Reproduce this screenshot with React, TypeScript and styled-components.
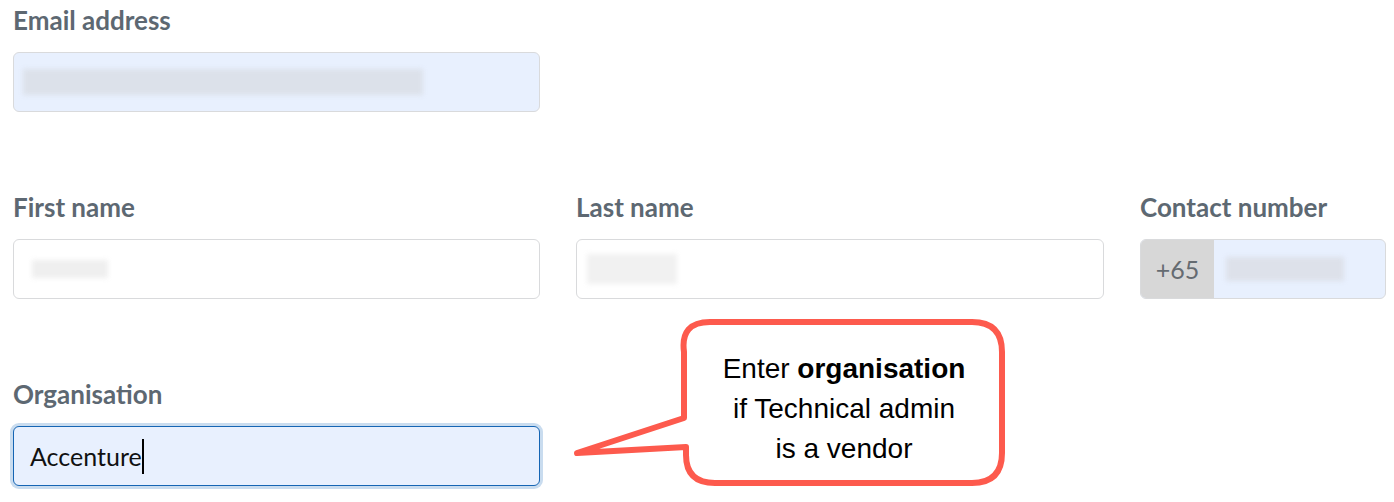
import React from 'react';
import styled, {createGlobalStyle, css} from 'styled-components';

const GlobalStyle = createGlobalStyle`
  html, body {
    margin: 0;
    padding: 0;
    background: #ffffff;
  }
  body {
    font-family: 'Lato', 'Noto Sans', sans-serif;
  }
`;

type Tone = 'autofill' | 'plain' | 'focus';

const Page = styled.div`
  position: relative;
  width: 1394px;
  height: 502px;
  overflow: hidden;
`;

const Form = styled.div`
  display: grid;
  grid-template-columns: 527px 528px 246px;
  column-gap: 36px;
  row-gap: 80px;
  padding: 5px 0 0 13px;
`;

const Field = styled.div<{$span?: number}>`
  display: flex;
  flex-direction: column;
  gap: 17px;
  grid-column: ${p => (p.$span ? `span ${p.$span}` : 'auto')};
`;

const Label = styled.label`
  font-size: 26px;
  line-height: 30px;
  font-weight: 700;
  color: #5d6872;
`;

const Box = styled.div<{$tone: Tone}>`
  box-sizing: border-box;
  height: 60px;
  border-radius: 6px;
  border: 1px solid #d9dadc;
  display: flex;
  align-items: center;
  overflow: hidden;
  ${p =>
    p.$tone === 'autofill' &&
    css`
      background: #e8f0fe;
    `}
  ${p =>
    p.$tone === 'plain' &&
    css`
      background: #ffffff;
    `}
  ${p =>
    p.$tone === 'focus' &&
    css`
      background: #e8f0fe;
      border-color: #1565b4;
      box-shadow: 0 0 0 3px #c9dcef;
    `}
`;

const Blur = styled.span<{$w: number; $h: number; $x: number; $c: string}>`
  display: block;
  width: ${p => p.$w}px;
  height: ${p => p.$h}px;
  margin-left: ${p => p.$x}px;
  background: ${p => p.$c};
  filter: blur(2.5px);
`;

const Prefix = styled.span`
  align-self: stretch;
  width: 73px;
  flex: none;
  background: #d7d7d7;
  color: #656b71;
  font-size: 25px;
  display: flex;
  align-items: center;
  justify-content: center;
`;

const Value = styled.span`
  margin-left: 16px;
  font-size: 25px;
  color: #111111;
  display: flex;
  align-items: center;
`;

const Caret = styled.span`
  display: inline-block;
  width: 2px;
  height: 35px;
  background: #000;
`;

const Callout = styled.div`
  position: absolute;
  left: 574px;
  top: 318px;
  width: 434px;
  height: 172px;
`;

const CalloutText = styled.div`
  position: absolute;
  left: 110px;
  top: 10px;
  width: 320px;
  height: 162px;
  display: flex;
  flex-direction: column;
  align-items: center;
  justify-content: center;
  font-family: 'Liberation Sans', Arial, sans-serif;
  font-size: 28px;
  line-height: 40px;
  color: #000;
  text-align: center;

  b {
    font-weight: 700;
  }
`;

export default function App() {
  return (
    <Page>
      <GlobalStyle />
      <Form>
        <Field $span={3}>
          <Label>Email address</Label>
          <Box $tone="autofill" style={{width: 527}}>
            <Blur $w={400} $h={26} $x={9} $c="#dce1ea" />
          </Box>
        </Field>
        <Field>
          <Label>First name</Label>
          <Box $tone="plain">
            <Blur $w={76} $h={18} $x={18} $c="#efefef" />
          </Box>
        </Field>
        <Field>
          <Label>Last name</Label>
          <Box $tone="plain">
            <Blur $w={90} $h={30} $x={10} $c="#f1f1f1" />
          </Box>
        </Field>
        <Field>
          <Label>Contact number</Label>
          <Box $tone="autofill">
            <Prefix>+65</Prefix>
            <Blur $w={118} $h={24} $x={12} $c="#dde1ea" />
          </Box>
        </Field>
        <Field $span={3}>
          <Label>Organisation</Label>
          <Box $tone="focus" style={{width: 527}}>
            <Value>
              Accenture
              <Caret />
            </Value>
          </Box>
        </Field>
      </Form>
      <Callout>
        <svg width="434" height="172" viewBox="0 0 434 172">
          <path
            d="M136 4 H398 Q428 4 428 34 V135 Q428 165 398 165 H141 Q112 165 112 137 V129 L3 135 L110 100 V34 Q106 4 136 4 Z"
            fill="#ffffff"
            stroke="#fd5a4d"
            strokeWidth="6"
            strokeLinejoin="round"
          />
        </svg>
        <CalloutText>
          <span>
            Enter <b>organisation</b>
          </span>
          <span>if Technical admin</span>
          <span>is a vendor</span>
        </CalloutText>
      </Callout>
    </Page>
  );
}
